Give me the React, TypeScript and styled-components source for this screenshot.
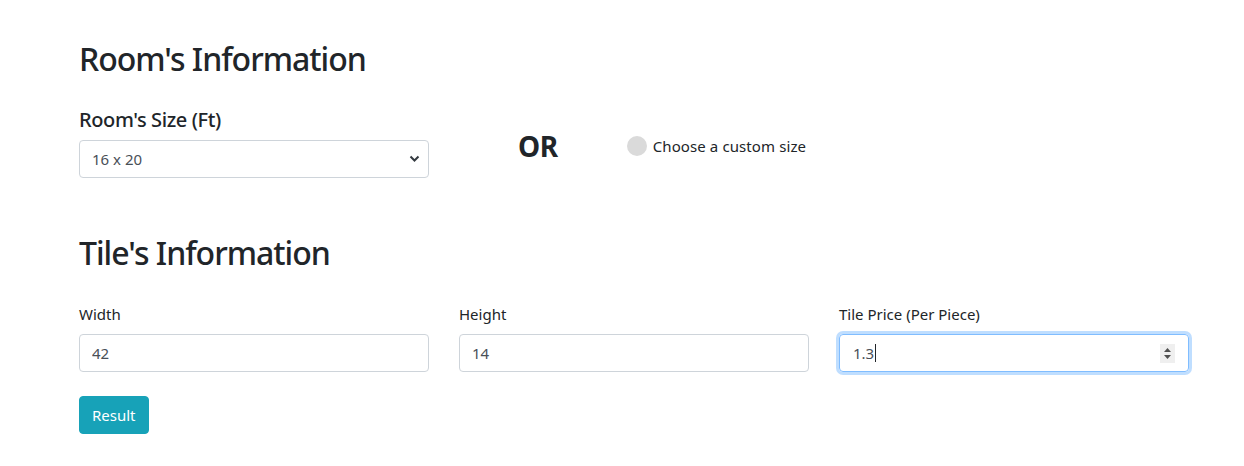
import React from 'react';
import styled, { createGlobalStyle } from 'styled-components';

const GlobalStyle = createGlobalStyle`
  body {
    margin: 0;
    background: #ffffff;
    color: #212529;
    font-family: "Noto Sans", "Open Sans", Arial, sans-serif;
  }
`;

const Page = styled.main`
  width: 1110px;
  padding: 40px 0 32px 79px;
`;

const Title = styled.h2<{ $top?: number }>`
  margin: ${p => p.$top ?? 0}px 0 0;
  font-size: 32px;
  font-weight: 500;
  line-height: 1.2;
  letter-spacing: -1px;
`;

const RoomRow = styled.div`
  display: flex;
  align-items: center;
  margin-top: 30px;
`;

const Field = styled.div`
  display: flex;
  flex-direction: column;
  width: 350px;
`;

const SizeLabel = styled.label`
  font-size: 20px;
  font-weight: 500;
  line-height: 1.2;
  letter-spacing: -0.4px;
  margin-bottom: 8px;
`;

const Label = styled.label`
  font-size: 15px;
  line-height: 24px;
  margin-bottom: 8px;
`;

const Select = styled.select`
  appearance: none;
  height: 38px;
  padding: 0 30px 0 12px;
  border: 1px solid #ced4da;
  border-radius: 4px;
  background: #fff;
  color: #495057;
  font: inherit;
  font-size: 15px;
`;

const SelectWrap = styled.div`
  position: relative;
  display: flex;
  flex-direction: column;

  svg {
    position: absolute;
    right: 9px;
    top: 15px;
    pointer-events: none;
  }
`;

const Or = styled.div`
  margin: 6px 69px 0 89px;
  font-size: 28px;
  font-weight: 700;
  letter-spacing: -0.4px;
  line-height: 1;
`;

const Radio = styled.label`
  display: flex;
  align-items: center;
  gap: 6px;
  font-size: 15px;
  letter-spacing: 0.1px;
  margin-top: 6px;
`;

const RadioDot = styled.span`
  width: 20px;
  height: 20px;
  border-radius: 50%;
  background: #dadada;
`;

const TileGrid = styled.div`
  display: grid;
  grid-template-columns: repeat(3, 350px);
  column-gap: 30px;
  margin-top: 29px;
`;

const Input = styled.input`
  box-sizing: border-box;
  height: 38px;
  padding: 0 12px;
  border: 1px solid #ced4da;
  border-radius: 4px;
  color: #495057;
  font: inherit;
  font-size: 15px;
  outline: none;
`;

const PriceBox = styled.div`
  position: relative;
  display: flex;
  align-items: center;
  box-sizing: border-box;
  height: 38px;
  padding: 0 12px 0 13px;
  border: 1px solid #80bdff;
  border-radius: 4px;
  box-shadow: 0 0 0 3px rgba(0, 123, 255, 0.25);
  color: #495057;
  font-size: 15px;
`;

const Caret = styled.span`
  width: 1px;
  height: 18px;
  margin-left: 1px;
  background: #212529;
`;

const Spinner = styled.span`
  position: absolute;
  right: 13px;
  top: 9px;
  width: 15px;
  height: 19px;
  background: #efefef;
  display: flex;
  flex-direction: column;
  align-items: center;
  justify-content: center;
  gap: 3px;
`;

const Button = styled.button`
  margin-top: 24px;
  height: 38px;
  padding: 0 12px;
  border: 1px solid #17a2b8;
  border-radius: 4px;
  background: #17a2b8;
  color: #fff;
  font: inherit;
  font-size: 15px;
`;

export default function App() {
  return (
    <>
      <GlobalStyle />
      <Page>
        <Title>Room's Information</Title>
        <RoomRow>
          <Field>
            <SizeLabel>Room's Size (Ft)</SizeLabel>
            <SelectWrap>
              <Select defaultValue="16x20">
                <option value="16x20">16 x 20</option>
              </Select>
              <svg width="11" height="8" viewBox="0 0 11 8">
                <path d="M1.5 1.5 5.5 5.5 9.5 1.5" fill="none" stroke="#343a40" strokeWidth="2" />
              </svg>
            </SelectWrap>
          </Field>
          <Or>OR</Or>
          <Radio>
            <RadioDot />
            Choose a custom size
          </Radio>
        </RoomRow>

        <Title $top={56}>Tile's Information</Title>
        <TileGrid>
          <Field>
            <Label>Width</Label>
            <Input defaultValue="42" />
          </Field>
          <Field>
            <Label>Height</Label>
            <Input defaultValue="14" />
          </Field>
          <Field>
            <Label>Tile Price (Per Piece)</Label>
            <PriceBox role="textbox">
              <span>1.3</span>
              <Caret />
              <Spinner>
                <svg width="7" height="4" viewBox="0 0 7 4"><path d="M0 4 3.5 0 7 4z" fill="#505050" /></svg>
                <svg width="7" height="4" viewBox="0 0 7 4"><path d="M0 0 3.5 4 7 0z" fill="#505050" /></svg>
              </Spinner>
            </PriceBox>
          </Field>
        </TileGrid>
        <Button>Result</Button>
      </Page>
    </>
  );
}
